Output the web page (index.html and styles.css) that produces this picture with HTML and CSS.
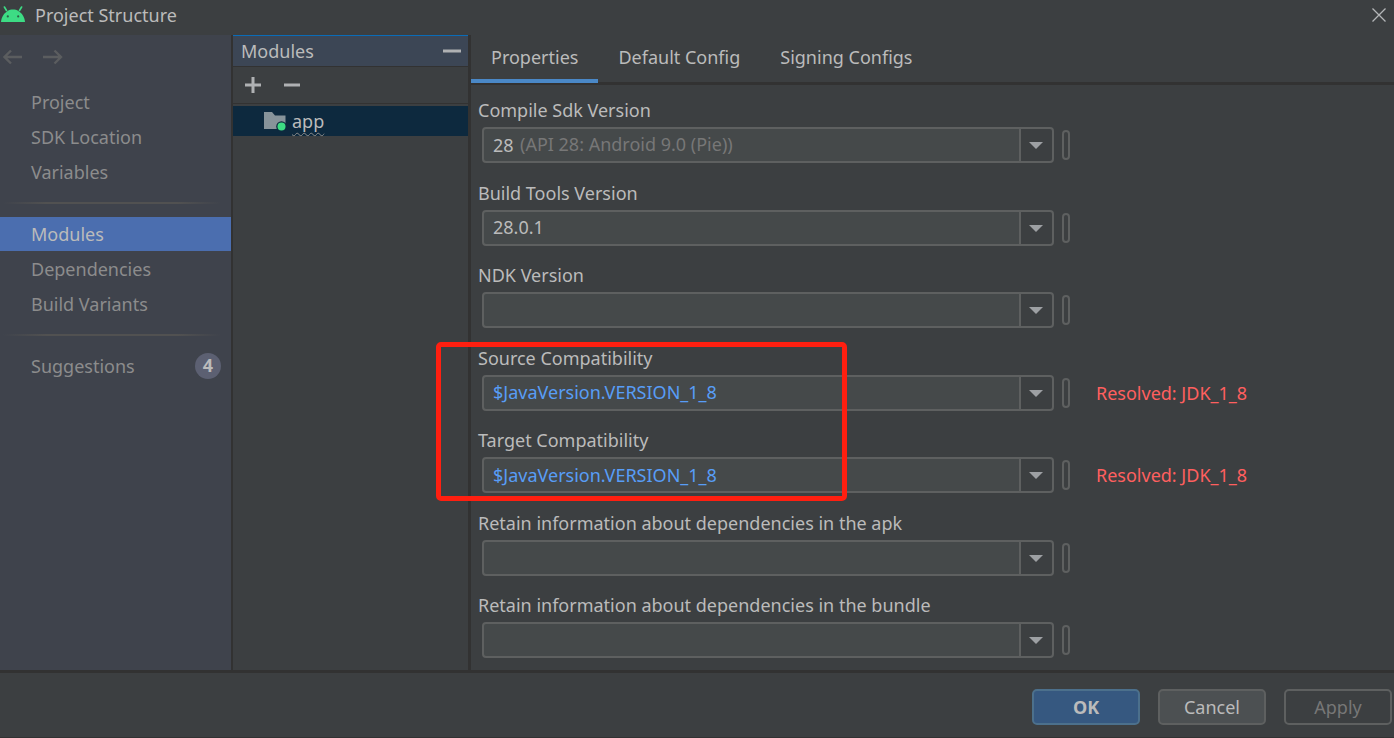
FILE: index.html
```html
<!DOCTYPE html>
<html lang="en">
    <head>
        <meta charset="utf-8">
        <title>Project Structure</title>
        <link rel="stylesheet" href="styles.css">
    </head>
    <body>
        <header id="title_bar">
            <svg class="android" width="26" height="17" viewBox="0 0 26 17">
                <path d="M6.5 4.5 L4.4 1 M19.5 4.5 L21.6 1" stroke="#3ddc84" stroke-width="1.6" stroke-linecap="round"/>
                <path d="M1 16 C1.4 11 4 7 7.6 4.9 C10.8 3.1 15.2 3.1 18.4 4.9 C22 7 24.6 11 25 16 Z" fill="#3ddc84"/>
                <circle cx="7.8" cy="10.4" r="1.1" fill="#2b5f45"/>
                <circle cx="18.2" cy="10.4" r="1.1" fill="#2b5f45"/>
            </svg>
            <h1>Project Structure</h1>
            <button class="icon_button" type="button" aria-label="Close">
                <svg width="16" height="16" viewBox="0 0 16 16"><path d="M1.5 1.5 L14.5 14.5 M14.5 1.5 L1.5 14.5" stroke="#b4b6b8" stroke-width="1.3"/></svg>
            </button>
        </header>

        <div id="main_block">
            <nav id="sidebar">
                <div class="history">
                    <button class="icon_button" type="button" aria-label="Back" disabled>
                        <svg width="20" height="16" viewBox="0 0 20 16"><path d="M19 8 H1.5 M8 1.5 L1.5 8 L8 14.5" fill="none" stroke="#5b5d5f" stroke-width="2.4"/></svg>
                    </button>
                    <button class="icon_button" type="button" aria-label="Forward" disabled>
                        <svg width="20" height="16" viewBox="0 0 20 16"><path d="M0 8 H18 M11.5 1.5 L18 8 L11.5 14.5" fill="none" stroke="#5b5d5f" stroke-width="2.4"/></svg>
                    </button>
                </div>
                <div class="nav_group">
                    <a href="#project">Project</a>
                    <a href="#sdk">SDK Location</a>
                    <a href="#variables">Variables</a>
                </div>
                <div class="nav_group">
                    <a class="active" href="#modules">Modules</a>
                    <a href="#dependencies">Dependencies</a>
                    <a href="#variants">Build Variants</a>
                </div>
                <div class="nav_group">
                    <a href="#suggestions">Suggestions <span class="badge">4</span></a>
                </div>
            </nav>

            <section id="modules">
                <div class="modules_header">
                    <h2>Modules</h2>
                    <button class="icon_button" type="button" aria-label="Hide">
                        <svg width="18" height="16" viewBox="0 0 18 16"><path d="M0 8 H18" stroke="#afb1b3" stroke-width="3"/></svg>
                    </button>
                </div>
                <div class="modules_toolbar">
                    <button class="icon_button" type="button" aria-label="Add module">
                        <svg width="16" height="16" viewBox="0 0 16 16"><path d="M0 8 H16 M8 0 V16" stroke="#afb1b3" stroke-width="3"/></svg>
                    </button>
                    <button class="icon_button" type="button" aria-label="Remove module">
                        <svg width="16" height="16" viewBox="0 0 16 16"><path d="M0 8 H16" stroke="#afb1b3" stroke-width="3"/></svg>
                    </button>
                </div>
                <button class="module_item" type="button">
                    <svg width="22" height="20" viewBox="0 0 22 20">
                        <path d="M0 1 H8 L11 4.5 H21.5 V18 H0 Z" fill="#87939a"/>
                        <circle cx="17.5" cy="15.5" r="5.3" fill="#0d293e"/>
                        <circle cx="17.5" cy="15.5" r="4" fill="#3ddc84"/>
                    </svg>
                    <span>app</span>
                </button>
            </section>

            <main id="content">
                <div class="tabs" role="tablist">
                    <button type="button" role="tab" aria-selected="true">Properties</button>
                    <button type="button" role="tab" aria-selected="false">Default Config</button>
                    <button type="button" role="tab" aria-selected="false">Signing Configs</button>
                </div>

                <form id="properties">
                    <div class="field">
                        <label for="compile_sdk">Compile Sdk Version</label>
                        <div class="line">
                            <div class="combo">
                                <select id="compile_sdk"><option>28</option></select>
                                <span class="hint">(API 28: Android 9.0 (Pie))</span>
                            </div>
                            <button class="variable" type="button" aria-label="Bind variable"></button>
                        </div>
                    </div>
                    <div class="field">
                        <label for="build_tools">Build Tools Version</label>
                        <div class="line">
                            <div class="combo"><select id="build_tools"><option>28.0.1</option></select></div>
                            <button class="variable" type="button" aria-label="Bind variable"></button>
                        </div>
                    </div>
                    <div class="field">
                        <label for="ndk">NDK Version</label>
                        <div class="line">
                            <div class="combo"><select id="ndk"><option></option></select></div>
                            <button class="variable" type="button" aria-label="Bind variable"></button>
                        </div>
                    </div>
                    <div class="compatibility">
                        <div class="field">
                            <label for="source_compat">Source Compatibility</label>
                            <div class="line">
                                <div class="combo"><select class="reference" id="source_compat"><option>$JavaVersion.VERSION_1_8</option></select></div>
                                <button class="variable" type="button" aria-label="Bind variable"></button>
                                <output for="source_compat">Resolved: JDK_1_8</output>
                            </div>
                        </div>
                        <div class="field">
                            <label for="target_compat">Target Compatibility</label>
                            <div class="line">
                                <div class="combo"><select class="reference" id="target_compat"><option>$JavaVersion.VERSION_1_8</option></select></div>
                                <button class="variable" type="button" aria-label="Bind variable"></button>
                                <output for="target_compat">Resolved: JDK_1_8</output>
                            </div>
                        </div>
                        <div class="highlight"></div>
                    </div>
                    <div class="field">
                        <label for="retain_apk">Retain information about dependencies in the apk</label>
                        <div class="line">
                            <div class="combo"><select id="retain_apk"><option></option></select></div>
                            <button class="variable" type="button" aria-label="Bind variable"></button>
                        </div>
                    </div>
                    <div class="field">
                        <label for="retain_bundle">Retain information about dependencies in the bundle</label>
                        <div class="line">
                            <div class="combo"><select id="retain_bundle"><option></option></select></div>
                            <button class="variable" type="button" aria-label="Bind variable"></button>
                        </div>
                    </div>
                </form>
            </main>
        </div>

        <footer id="buttons">
            <button class="primary" type="button">OK</button>
            <button type="button">Cancel</button>
            <button type="button" disabled>Apply</button>
        </footer>
    </body>
</html>
```
FILE: styles.css
```css
* {

    box-sizing: border-box;
}

body {

    display: flex;
    flex-direction: column;
    min-height: 100vh;
    margin: 0;

    background: #3c3f41;
    color: #bbbbbb;

    font-family: "Noto Sans", "Open Sans", sans-serif;
    font-size: 18px;
    line-height: 24px;
}

h1, h2 {

    margin: 0;
    font-size: 18px;
    font-weight: 400;
}

button, select {

    font: inherit;
    color: inherit;
}

svg {

    display: block;
}

.icon_button {

    padding: 0;
    border: none;
    background: none;
}

/* title bar */

#title_bar {

    display: flex;
    align-items: center;
    height: 35px;
    padding: 0 7px 6px 0;
}

#title_bar h1 {

    flex: 1;
    margin-left: 9px;
}

#main_block {

    display: flex;
    flex: 1;
}

/* left navigation */

#sidebar {

    width: 233px;
    border-right: 2px solid #323232;
    background: #3f434c;
    color: #8c8c8c;
}

.history {

    display: flex;
    gap: 20px;
    padding: 14px 3px 20px;
}

.nav_group {

    display: flex;
    flex-direction: column;
    gap: 1px;
}

.nav_group + .nav_group::before {

    content: "";
    height: 2px;
    margin: 13px 10px 12px 3px;
    background: linear-gradient(to right, transparent, #515151 20%, #515151 80%, transparent);
}

.nav_group a {

    display: flex;
    align-items: center;
    justify-content: space-between;
    height: 34px;
    padding: 0 10px 0 31px;

    color: inherit;
    text-decoration: none;
}

.nav_group a.active {

    background: #4b6eaf;
    color: #bbbbbb;
}

.badge {

    width: 26px;
    height: 26px;
    border-radius: 50%;

    background: #5c6072;
    color: #bbbbbb;

    font-weight: 700;
    text-align: center;
}

/* module list */

#modules {

    width: 238px;
    border-right: 3px solid #323232;
}

.modules_header {

    display: flex;
    align-items: center;
    justify-content: space-between;
    height: 32px;
    padding: 0 7px 0 8px;

    border-top: 1px solid #0a6cb8;
    border-bottom: 1px solid #323232;
    background: #3c4655;
}

.modules_toolbar {

    display: flex;
    align-items: center;
    gap: 23px;
    height: 37px;
    padding-left: 12px;
    border-bottom: 1px solid #323232;
}

.module_item {

    display: flex;
    align-items: center;
    gap: 6px;
    width: 100%;
    height: 30px;
    margin-top: 2px;
    padding: 0 31px 1px;

    border: none;
    background: #0d293e;
}

.module_item span {

    text-decoration: underline wavy #8c8c8c 1px;
    text-underline-offset: 4px;
    text-decoration-skip-ink: none;
}

/* properties */

#content {

    display: flex;
    flex: 1;
    flex-direction: column;
}

.tabs {

    display: flex;
    height: 50px;
    border-bottom: 3px solid #323232;
}

.tabs button {

    height: 48px;
    padding: 0 20px;
    border: none;
    border-bottom: 4px solid transparent;
    background: none;
}

.tabs button[aria-selected="true"] {

    border-bottom-color: #4a88c7;
}

#properties {

    display: grid;
    flex: 1;
    align-content: space-between;
    padding: 13px 7px 12px;
}

.field label {

    display: block;
    margin-bottom: 5px;
}

.line {

    display: flex;
    align-items: center;
    padding-left: 4px;
}

.combo {

    position: relative;
    flex: 0 1 572px;
}

.combo select {

    display: block;
    width: 100%;
    height: 36px;
    padding: 0 44px 1px 9px;

    appearance: none;
    border: 2px solid #5e6060;
    border-radius: 4px;
    background: linear-gradient(to left, #3c3f41 31px, #5e6060 31px, #5e6060 33px, #45494a 33px);
}

.combo select.reference {

    color: #589df6;
}

.combo::after {

    content: "";
    position: absolute;
    top: 15px;
    right: 11px;

    border: 7px solid transparent;
    border-top-color: #9da0a3;
    border-bottom: none;
    pointer-events: none;
}

.hint {

    position: absolute;
    top: 5px;
    left: 38px;

    color: #777777;
    pointer-events: none;
}

.variable {

    width: 8px;
    height: 30px;
    margin-left: 8px;
    padding: 0;

    border: 2px solid #5e6060;
    border-radius: 4px;
    background: none;
}

.line output {

    margin-left: 26px;
    color: #ff5f5f;
}

/* the two compatibility rows with the red frame over them */

.compatibility {

    position: relative;
    display: flex;
    flex-direction: column;
    justify-content: space-between;
    grid-row: span 2;
}

.highlight {

    position: absolute;
    top: -4px;
    bottom: -8px;
    left: -42px;
    width: 411px;

    border: 5px solid #ff1f10;
    border-radius: 5px;
    pointer-events: none;
}

/* bottom buttons */

#buttons {

    display: flex;
    justify-content: flex-end;
    gap: 18px;
    padding: 16px 2px 12px;
    border-top: 3px solid #323232;
    border-bottom: 1px solid #323232;
}

#buttons button {

    width: 108px;
    height: 36px;
    padding: 0;

    border: 2px solid #5e6060;
    border-radius: 5px;
    background: #4c5052;
}

#buttons button.primary {

    border-color: #4c708c;
    background: #365880;
    font-weight: 700;
}

#buttons button:disabled {

    background: none;
    color: #777777;
}
```
